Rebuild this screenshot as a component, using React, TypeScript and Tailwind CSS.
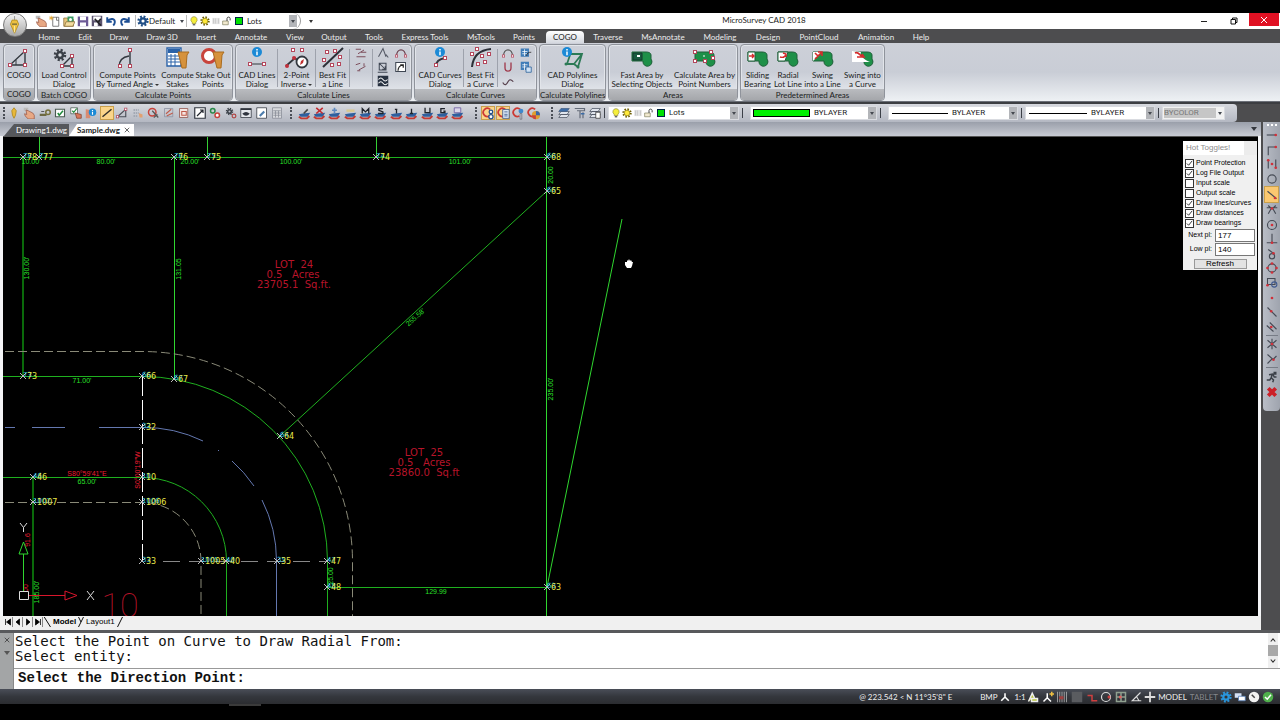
import type { ReactNode } from "react";

type Box = { children: ReactNode; className?: string };

function Ico({ children, className = "size-3" }: Box) {
  return (
    <svg viewBox="0 0 16 16" className={`${className} shrink-0`} fill="none" aria-hidden="true">
      {children}
    </svg>
  );
}

function Big({ children, className = "w-[26px]" }: Box) {
  return (
    <svg viewBox="0 0 26 22" className={`${className} h-[22px] shrink-0`} fill="none" aria-hidden="true">
      {children}
    </svg>
  );
}

function Node({ x, y }: { x: number; y: number }) {
  return <rect x={x - 1.5} y={y - 1.5} width="3" height="3" fill="#fff" stroke="#b4475c" />;
}

function Gear({ cx, cy, r, color, hole }: { cx: number; cy: number; r: number; color: string; hole: string }) {
  return (
    <g>
      <circle cx={cx} cy={cy} r={r} stroke={color} strokeWidth={r * 0.5} strokeDasharray={`${r * 0.42} ${r * 0.365}`} />
      <circle cx={cx} cy={cy} r={r * 0.85} fill={color} />
      <circle cx={cx} cy={cy} r={r * 0.35} fill={hole} />
    </g>
  );
}

function Info({ cx, cy, r }: { cx: number; cy: number; r: number }) {
  return (
    <g>
      <circle cx={cx} cy={cy} r={r} fill="#1c8ad6" />
      <path d={`M${cx} ${cy - r * 0.6}v${r * 0.3}M${cx} ${cy - r * 0.1}v${r * 0.75}`} stroke="#fff" strokeWidth={r * 0.3} />
    </g>
  );
}

const dark = "#33383f";

/* quick access + layer glyphs */
const hand = (
  <Ico>
    <path d="M1 1h6v4H1z" fill="#bbb" />
    <path d="M4 4l3 1 6 3 2 3v5H7l-4-4-1-3 3 1z" fill="#e8a884" stroke="#9a5a48" />
  </Ico>
);
const newDoc = (
  <Ico>
    <path d="M5 3h8v12H5z" fill="#fff" stroke="#555" />
    <path d="M3 1v6M0 4h6M1 2l4 4M5 2L1 6" stroke="#e0a020" />
    <path d="M10 3v4h3" stroke="#555" />
  </Ico>
);
const openDoc = (
  <Ico>
    <path d="M1 4h5l1 2h7v9H1z" fill="#e9c77c" stroke="#8a6d3b" />
    <path d="M6 2h8v8H6z" fill="#3b9a64" />
    <path d="M4 9h12l-3 6H2z" fill="#f3dc9e" stroke="#8a6d3b" />
    <circle cx="10" cy="6" r="2" fill="#fff" />
  </Ico>
);
const save = (
  <Ico>
    <path d="M1 2h14v13H1z" fill="#6d5a96" />
    <path d="M4 2h8v5H4zM4 10h8v5H4z" fill="#fff" />
  </Ico>
);
const saveAs = (
  <Ico>
    <path d="M1 1h14v14H1z" fill="#5c5470" />
    <path d="M3 2h10v5H3zM4 10h5v5H4z" fill="#fff" />
    <path d="M5 5l8 9M13 5l-3 4" stroke="#222" strokeWidth="2" />
  </Ico>
);
const undo = (
  <Ico>
    <path d="M3 3v6h6M3 9c4-6 11-4 10 1 0 2-1 3-2 4" stroke="#1e4f94" strokeWidth="2.6" />
  </Ico>
);
const redo = (
  <Ico>
    <path d="M13 3v6H7M13 9C9 3 2 5 3 10c0 2 1 3 2 4" stroke="#1e4f94" strokeWidth="2.6" />
  </Ico>
);

const quick = [
  { name: "Select", icon: hand },
  { name: "New", icon: newDoc },
  { name: "Open", icon: openDoc },
  { name: "Save", icon: save },
  { name: "Save as", icon: saveAs },
  { name: "Undo", icon: undo },
  { name: "Redo", icon: redo },
];

function LayerGlyphs() {
  return (
    <span className="flex items-center gap-px">
      <Ico className="size-2.5">
        <path d="M8 1a5 5 0 0 1 3 9v2H5v-2a5 5 0 0 1 3-9z" fill="#f5ee3c" stroke="#8c8630" />
        <path d="M6 13h4v2H6z" fill="#555" />
      </Ico>
      <Ico className="size-2.5">
        <circle cx="8" cy="8" r="6" stroke="#6b5d00" strokeWidth="3" strokeDasharray="2.4 2.3" />
        <circle cx="8" cy="8" r="4.5" fill="#ffe93a" stroke="#7a6a00" />
      </Ico>
      <Ico className="size-2.5">
        <path d="M2 3h12v10H2z" fill="#e4e4e4" />
        <path d="M4 4v8M7 4v8M12 4v8" stroke="#bbb" />
      </Ico>
      <Ico className="size-2.5">
        <path d="M1 8h9v6H1z" fill="#f1e9cf" stroke="#775" />
        <path d="M8 8V4c0-3 5-3 5 0v3" stroke="#444" strokeWidth="1.6" />
      </Ico>
      <span className="ml-0.5 size-2 border border-[#024] bg-[#00e000]" />
    </span>
  );
}

/* ribbon icons */
const cogo = (
  <Big>
    <path d="M4 18L19 4v14z" stroke={dark} strokeWidth="1.4" />
    <path d="M10 13v5" stroke={dark} />
    <Node x={4} y={18} />
    <Node x={19} y={4} />
    <Node x={19} y={18} />
  </Big>
);
const control = (
  <Big>
    <Gear cx={9} cy={8} r={5} color="#3b4048" hole="#d8dbe1" />
    <path d="M11 19l10-10v10z" stroke={dark} strokeWidth="1.4" />
    <Node x={11} y={19} />
    <Node x={21} y={9} />
    <Node x={21} y={19} />
  </Big>
);
const turned = (
  <Big>
    <path d="M15 3v17M4 20c0-6 3-10 10-11" stroke={dark} strokeWidth="1.4" />
    <Node x={15} y={3} />
    <Node x={15} y={19} />
    <Node x={5} y={19} />
  </Big>
);
const stakes = (
  <Big>
    <path d="M2 1h14v18H2z" fill="#fff" stroke="#2a62a8" strokeWidth="1.4" />
    <path d="M3 2h12v4H3z" fill="#2a62a8" />
    <path d="M3 9h12M3 12h12M3 15h12M6 7v12M10 7v12" stroke="#2a62a8" />
    <path d="M13 5h11l-2 3-1 13h-4L14 9z" fill="#d6923c" stroke="#a96c20" />
  </Big>
);
const stakeOut = (
  <Big>
    <circle cx="9" cy="9" r="6.5" fill="#fff" stroke="#c8443c" strokeWidth="3" />
    <path d="M13 5h11l-2 3-1 13h-4L14 9z" fill="#d6923c" stroke="#a96c20" />
  </Big>
);
const cadLines = (
  <Big>
    <Info cx={13} cy={5} r={5} />
    <path d="M6 17h14" stroke={dark} strokeWidth="1.2" />
    <Node x={6} y={17} />
    <Node x={20} y={17} />
  </Big>
);
const inverse = (
  <Big>
    <path d="M2 19l9-8 4 4" stroke={dark} strokeWidth="1.8" />
    <circle cx="18" cy="15" r="5.5" fill="#fff" stroke={dark} strokeWidth="1.8" />
    <path d="M16 18l1-4 3-2-1 4z" fill="#c03030" />
    <Node x={9} y={3} />
    <Node x={18} y={3} />
    <circle cx="3" cy="19" r="2" fill="#c0303c" />
    <circle cx="10" cy="11" r="2" fill="#c0303c" />
  </Big>
);
const fitLine = (
  <Big>
    <path d="M3 20L23 1" stroke="#2c3038" strokeWidth="2" />
    <Node x={7} y={5} />
    <Node x={15} y={4} />
    <Node x={4} y={13} />
    <Node x={20} y={10} />
    <Node x={12} y={18} />
    <Node x={19} y={17} />
  </Big>
);
const cadCurves = (
  <Big>
    <Info cx={13} cy={5} r={5} />
    <path d="M9 19c0-5 3-7 9-8" stroke={dark} strokeWidth="1.8" />
    <Node x={9} y={18} />
    <Node x={18} y={11} />
  </Big>
);
const fitCurve = (
  <Big>
    <path d="M4 20C5 9 12 3 23 2" stroke="#2c3038" strokeWidth="2" />
    <Node x={4} y={7} />
    <Node x={9} y={2} />
    <Node x={14} y={9} />
    <Node x={21} y={7} />
    <Node x={10} y={17} />
    <Node x={17} y={15} />
  </Big>
);
const polylines = (
  <Big>
    <path d="M6 7h16l-4 13-4-3 8-10M10 8l-3 9h8" stroke="#2c7a56" strokeWidth="1.8" />
    <circle cx="6" cy="17" r="1.5" fill="#2c7a56" />
    <circle cx="18" cy="20" r="1.5" fill="#2c7a56" />
    <Info cx={7} cy={5} r={5} />
  </Big>
);

function Lot({ children }: { children?: ReactNode }) {
  return (
    <Big>
      <path d="M3 5h14c3 0 5 1 5 3v4a4.500 4.500 0 1 1-8 2H3z" fill="#1e9048" stroke="#20603a" />
      {children}
    </Big>
  );
}
const fastArea = (
  <Lot>
    <path d="M4 6h9v7H4z" fill="#1a5c40" stroke="#14382c" />
    <rect x="8" y="8" width="3" height="2" fill="#fff" />
  </Lot>
);
const calcArea = (
  <Lot>
    <Node x={3} y={5} />
    <Node x={19} y={5} />
    <Node x={3} y={14} />
    <Node x={13} y={14} />
    <Node x={21} y={11} />
    <path d="M11 9h2" stroke="#fff" />
  </Lot>
);
const sliding = (
  <Lot>
    <path d="M3 5h7v9H3z" fill="#fff" stroke="#20603a" />
    <path d="M4 9h5M7 7l2 2-2 2" stroke="#d42c2c" strokeWidth="1.4" />
  </Lot>
);
const radial = (
  <Lot>
    <path d="M3 5h10l-3 9H3z" fill="#fff" stroke="#20603a" />
    <path d="M5 10c3 1 5 0 6-3M8 6l3 1v3" stroke="#d42c2c" strokeWidth="1.4" />
  </Lot>
);
const swingLine = (
  <Lot>
    <path d="M3 5l9 0-9 9z" fill="#fff" />
    <path d="M5 12l7-7M8 5h4v4M5 6l3 3" stroke="#d42c2c" strokeWidth="1.6" />
  </Lot>
);
const swingCurve = (
  <Lot>
    <path d="M2 4l9 1c-2 4 4 8 9 10L2 15z" fill="#fff" />
    <path d="M5 6c4-2 5 4 9 4M7 10h7l-2-3" stroke="#d42c2c" strokeWidth="1.6" />
  </Lot>
);

type Tool = { label: [string, string?]; icon: ReactNode; width: string; drop?: boolean };

function RibbonButton({ label, icon, width, drop }: Tool) {
  return (
    <button className={`${width} flex shrink-0 flex-col items-center whitespace-nowrap leading-[9px]`}>
      {icon}
      <span className="mt-0.5">{label[0]}</span>
      <span>
        {label[1]}
        {drop && <span className="ml-0.5 inline-block border-x-2 border-t-2 border-x-transparent border-t-[#333] align-middle" />}
      </span>
    </button>
  );
}

function Rule() {
  return <span className="my-0.5 w-px shrink-0 self-stretch border-l border-[#9ea2ac] bg-white" />;
}

function Group({ title, width, children }: { title: string; width: string; children: ReactNode }) {
  return (
    <section className={`${width} flex shrink-0 flex-col overflow-hidden rounded-sm border border-[#8f939b] shadow-[inset_0_0_0_1px_#e2e5ea]`}>
      <div className="flex h-11 items-start justify-center pt-0.5">{children}</div>
      <h2 className="bg-gradient-to-b from-[#b9bbbf] to-[#a3a5a9] text-center leading-3 whitespace-nowrap">{title}</h2>
    </section>
  );
}

const smallLines = [
  [
    <Ico><path d="M1 3h7M8 7h7M2 13h12M4 9l8-5" stroke="#7a4a58" strokeWidth="1.3" /></Ico>,
    <Ico><path d="M1 5l6-2M5 12l9-5M3 13h4M12 3v4" stroke="#7a4a58" strokeWidth="1.3" /></Ico>,
  ],
  [
    <Ico><path d="M2 13L8 2l4 11M12 10l3 4" stroke="#555a66" strokeWidth="1.4" /></Ico>,
    <Ico><path d="M3 3h9v9H3zM1 15h13M3 3l8 8M11 7v4H7" stroke="#3f4653" strokeWidth="1.4" /></Ico>,
    <Ico><path d="M1 1h14v14H1z" fill="#283241" /><path d="M2 6q3-4 6 0t6 0M2 11q3-4 6 0t6 0" stroke="#fff" strokeWidth="1.4" /></Ico>,
  ],
  [
    <Ico><path d="M2 12C2 1 14 1 14 12" stroke="#6a3f4c" strokeWidth="1.6" /><Node x={2} y={12} /><Node x={14} y={12} /></Ico>,
    <Ico><path d="M1 2h13v12H1z" fill="#fff" stroke="#3f4653" strokeWidth="1.4" /><path d="M4 13c0-4 2-7 7-8M7 5h4v4" stroke="#222" strokeWidth="1.6" /></Ico>,
  ],
];
const smallCurves = [
  [
    <Ico><path d="M2 12C2 1 14 1 14 12" stroke="#555" strokeWidth="1.6" /><Node x={2} y={12} /><Node x={14} y={12} /></Ico>,
    <Ico><path d="M4 2v7c0 6 8 6 8 0V2" stroke="#a03a4c" strokeWidth="1.8" /></Ico>,
    <Ico><path d="M1 10c3 5 5 3 7-1s5-3 7 0" stroke="#5a4450" strokeWidth="1.6" /></Ico>,
  ],
  [
    <Ico><path d="M1 2h11v11H1z" fill="#3f7db8" /><path d="M3 6h7M3 9h7M6 3v9" stroke="#fff" /><path d="M9 12c0-4 2-5 6-5" stroke="#222" /></Ico>,
    <Ico><path d="M1 1h11v11H1z" fill="#3f7db8" /><path d="M3 5h7M3 8h7M6 3v9" stroke="#fff" /><path d="M8 8h7v7H8z" fill="#cfe2f5" stroke="#225a94" /></Ico>,
  ],
];

function SmallColumn({ icons, width }: { icons: ReactNode[]; width: string }) {
  return (
    <div className={`${width} flex shrink-0 flex-col items-center gap-[3px]`}>
      {icons.map((icon, i) => (
        <button key={i} aria-label={`Tool ${i + 1}`} className="h-[11px]">
          {icon}
        </button>
      ))}
    </div>
  );
}

const tabs = [
  ["Home", "w-[34px]"], ["Edit", "w-[38px]"], ["Draw", "w-[30px]"], ["Draw 3D", "w-[56px]"],
  ["Insert", "w-[32px]"], ["Annotate", "w-[58px]"], ["View", "w-[30px]"], ["Output", "w-[48px]"],
  ["Tools", "w-[32px]"], ["Express Tools", "w-[70px]"], ["MsTools", "w-[42px]"], ["Points", "w-[44px]"],
  ["COGO", "w-[38px]"], ["Traverse", "w-[48px]"], ["MsAnnotate", "w-[62px]"], ["Modeling", "w-[52px]"],
  ["Design", "w-[44px]"], ["PointCloud", "w-[58px]"], ["Animation", "w-[56px]"], ["Help", "w-[34px]"],
];

/* toolbar strips */
const ship = (mark: ReactNode) => (
  <Ico className="size-[13px]">
    <path d="M1 9l5-1 9-1-3 5H3z" fill="#2f5f9e" />
    <path d="M1 12l3 2h7l3-3" stroke="#c43a34" strokeWidth="2.4" />
    {mark}
  </Ico>
);
const red = (d: string) => <path d={d} stroke="#c22a30" strokeWidth="2" />;
const ink = (d: string) => <path d={d} stroke="#20242c" strokeWidth="1.6" />;

const stripA: { name: string; icon: ReactNode; on?: boolean }[] = [
  { name: "Plumb bob", icon: <Ico><path d="M8 1l3 4-1 6-2 4-2-4-1-6z" fill="#e8b83a" stroke="#a88218" /></Ico> },
  { name: "Pick", icon: hand },
  { name: "Key in", icon: <Ico><path d="M1 9h9v3H1z" fill="#6d6a44" /><circle cx="12" cy="7" r="3" stroke="#76713c" strokeWidth="2" /><path d="M3 6h4" stroke="#333" /></Ico> },
  { name: "Check", icon: <Ico><path d="M2 3h12v10H2z" fill="#fff" stroke="#4a5a52" strokeWidth="1.5" /><path d="M5 8l2 3 5-6" stroke="#218a3c" strokeWidth="2" /></Ico> },
  { name: "Check and edit", icon: <Ico><path d="M1 1h9v8H1z" fill="#fff" stroke="#4a5a52" /><path d="M3 5l2 2 4-5" stroke="#218a3c" strokeWidth="1.6" /><path d="M7 8l8 2v5H9z" fill="#d9775a" stroke="#84402c" /></Ico> },
  { name: "Info", icon: <Ico><path d="M1 3l6 1v11H1z" fill="#d88a70" /><Info cx={10} cy={7} r={5} /></Ico> },
  { name: "Draw line", on: true, icon: <Ico><path d="M2 13L14 3" stroke="#33302a" strokeWidth="2" /></Ico> },
  { name: "Triangle", icon: <Ico><path d="M2 13L13 3v10z" stroke="#4a4e58" strokeWidth="1.5" /><Node x={2} y={13} /><Node x={13} y={3} /></Ico> },
  { name: "Dots", icon: <Ico><path d="M2 4h7M2 8h7M2 12h5" stroke="#98a0ac" strokeWidth="2" strokeDasharray="2 1" /><path d="M9 8l5 2v4h-4z" fill="#e2a070" /></Ico> },
  { name: "Target", icon: <Ico><circle cx="7" cy="7" r="5" stroke="#c8443c" strokeWidth="2" /><path d="M7 5l8 9M9 14l5-4" stroke="#555" strokeWidth="1.6" /></Ico> },
  { name: "Text", icon: <Ico><path d="M2 2h11v11H2z" stroke="#8b90a0" /><path d="M4 9l7-6M5 12l8-4" stroke="#c05a4a" strokeWidth="1.4" /></Ico> },
  { name: "Block", icon: <Ico><path d="M2 2h11v12H2z" fill="#f5e6e2" stroke="#8d5048" /><path d="M5 6h6v5H5z" stroke="#c05a4a" strokeWidth="1.4" /></Ico> },
  { name: "Scale", icon: <Ico><path d="M1 1h14v14H1z" fill="#fff" stroke="#2f343e" strokeWidth="1.6" />{ink("M4 12l8-8M8 4h4v4")}</Ico> },
  { name: "Rotate", icon: <Ico><circle cx="5" cy="5" r="3" stroke="#2a8a4a" strokeWidth="2" /><circle cx="11" cy="11" r="3" fill="#fff" stroke="#c8443c" strokeWidth="2" /></Ico> },
  { name: "Settings", icon: <Ico><Gear cx={6} cy={6} r={4} color="#3b4048" hole="#bcc0ca" /><circle cx="12" cy="12" r="2.5" stroke="#b04848" strokeWidth="1.6" /></Ico> },
  { name: "Preview", icon: <Ico><path d="M1 2h14v12H1z" fill="#e4e7ec" stroke="#2f343e" /><path d="M1 2h14v2H1z" fill="#2f343e" /><path d="M3 9q5-5 10 0-5 5-10 0z" fill="#2f343e" /></Ico> },
  { name: "Edit sheet", icon: <Ico><path d="M1 1h13v14H1z" fill="#fff" stroke="#2f343e" /><path d="M4 11l6-6 2 2-6 6z" fill="#4c7cac" /></Ico> },
  { name: "Calculator", icon: <Ico><path d="M2 1h12v14H2z" fill="#d8dade" stroke="#858a94" /><path d="M3 5h10M3 8h10M3 11h10M6 5v9M10 5v9" stroke="#858a94" /></Ico> },
];
const stripB = [
  ship(<path d="M7 8l5-5" stroke="#444" strokeWidth="2" />),
  ship(red("M4 1l8 7M12 1l-8 7")),
  ship(<path d="M8 1v7M5 4h6" stroke="#5e8ac0" strokeWidth="2" />),
  ship(<path d="M3 3h10v3H3z" fill="#d8c890" />),
  ship(ink("M4 8V2l4 4 4-4v6")),
  ship(ink("M11 2H6v2l5 2v2H5")),
  ship(ink("M8 8V2M6 3h3")),
  ship(ink("M8 8V2M6 8h4")),
  ship(ink("M5 1v6h6V1")),
  ship(ink("M11 2H6v5h5V5H9")),
  ship(<path d="M4 1h8v6H4z" fill="#dcd6ea" stroke="#6a5aa0" />),
];
const lens = (extra: ReactNode) => (
  <Ico className="size-[13px]">
    <path d="M9 11A5 5 0 1 1 10 3" stroke="#cc3a34" strokeWidth="2.2" />
    {extra}
  </Ico>
);
const stripC: { icon: ReactNode; on?: boolean }[] = [
  { on: true, icon: lens(<><circle cx="11" cy="6" r="2.2" fill="#fff" stroke="#26518e" strokeWidth="1.6" /><circle cx="11" cy="12" r="2.6" fill="#fff" stroke="#26518e" strokeWidth="1.6" /></>) },
  { on: true, icon: lens(<><path d="M7 3h8v11H7z" fill="#dbe6f4" stroke="#39598a" /><path d="M9 6h4M9 9h4M9 11h4" stroke="#39598a" /></>) },
  { icon: lens(<><circle cx="11" cy="5" r="3" fill="#3f87cc" /><path d="M10 8h2v7h-2z" fill="#eee" stroke="#667" /></>) },
  { icon: lens(<><circle cx="11" cy="10" r="5" fill="#e0a030" /><path d="M11 5a5 5 0 0 1 5 5h-5z" fill="#3a66a8" /><path d="M11 10v5a5 5 0 0 1-5-5z" fill="#c8443c" /></>) },
];
const layers = <path d="M4 2h11l-3 4H1zM4 6h11l-3 4H1zM4 10h11l-3 4H1z" fill="#dfe4ec" stroke="#4f5664" />;
const stripD = [
  <Ico>{layers}<path d="M4 2h11l-3 4H1z" fill="#3d6ca6" /></Ico>,
  <Ico><path d="M1 2h13v3H4M8 5v10M12 7v8" stroke="#646b78" strokeWidth="1.6" /><path d="M9 9h5" stroke="#3d6ca6" strokeWidth="2" /></Ico>,
  <Ico>{layers}<path d="M9 7h6v8H9z" fill="#fff" stroke="#333" /></Ico>,
];

function Grip() {
  return <span className="h-3 shrink-0 border-l-2 border-dotted border-[#4a4e56]" />;
}
function Bar() {
  return <span className="h-2.5 w-px shrink-0 bg-[#3c4048]" />;
}

function Strip({ width, children }: { width: string; children: ReactNode }) {
  return <div className={`${width} flex shrink-0 items-center justify-between`}>{children}</div>;
}

function Tiny({ icon, on, name }: { icon: ReactNode; on?: boolean; name: string }) {
  return (
    <button
      aria-label={name}
      className={
        on
          ? "flex size-[14px] items-center justify-center border border-[#c9a04c] bg-[#fbd58a]"
          : "flex size-[14px] items-center justify-center"
      }
    >
      {icon}
    </button>
  );
}

function Caret({ plain }: { plain?: boolean }) {
  return (
    <span className={plain ? "flex w-2 shrink-0 items-center justify-center self-stretch" : "flex w-2 shrink-0 items-center justify-center self-stretch bg-[#b3b5b9]"}>
      <span className="border-x-2 border-t-[3px] border-x-transparent border-t-[#44484f]" />
    </span>
  );
}

function Combo({ name, value, width, lead }: { name: string; value: string; width: string; lead: ReactNode }) {
  return (
    <div className={`${width} flex h-[14px] shrink-0 items-center gap-1 border border-[#d9dbe0] bg-white pl-0.5`}>
      {lead}
      <select aria-label={name} className="min-w-0 flex-1 appearance-none bg-transparent leading-3">
        <option>{value}</option>
      </select>
      <Caret />
    </div>
  );
}

/* snap toolbar on the right edge */
const dot = (x: number, y: number, r = 1.8) => <circle cx={x} cy={y} r={r} fill="#d0303a" />;
const line = (d: string) => <path d={d} stroke="#454a54" strokeWidth="1.5" />;
const snaps: { name: string; icon: ReactNode; on?: boolean }[] = [
  { name: "Endpoint", icon: <>{line("M1 8h12")}{dot(13, 8)}</> },
  { name: "From", icon: <>{line("M3 15V4h9")}{dot(13, 4)}</> },
  { name: "Midpoint", icon: <>{line("M3 2v12M13 2v12")}{dot(3, 3)}{dot(8, 8)}{dot(13, 13)}</> },
  { name: "Circle", icon: <circle cx="8" cy="8" r="5.5" stroke="#454a54" strokeWidth="1.5" /> },
  { name: "Nearest", on: true, icon: <>{line("M2 3l12 10")}{dot(12, 12)}</> },
  { name: "Apparent", icon: <>{line("M1 5h14M3 13l4-7M13 13L9 6M3 2l3 3M13 2l-3 3")}{dot(8, 6)}</> },
  { name: "Center", icon: <><circle cx="8" cy="8" r="6" stroke="#454a54" strokeWidth="1.5" />{dot(8, 8)}</> },
  { name: "Perpendicular", icon: <>{line("M8 1v12M1 13h14")}{dot(8, 13)}</> },
  { name: "Tangent", icon: <><circle cx="8" cy="11" r="3.5" stroke="#454a54" strokeWidth="1.5" />{line("M3 2l8 6")}{dot(10, 7)}</> },
  { name: "Quadrant", icon: <><circle cx="8" cy="8" r="5.5" stroke="#454a54" strokeWidth="1.5" />{dot(8, 2)}{dot(8, 14)}{dot(2, 8)}{dot(14, 8)}</> },
  { name: "Insertion", icon: <><path d="M2 2h10v8H2z" stroke="#454a54" strokeWidth="1.4" /><circle cx="11" cy="10" r="3.5" stroke="#405a90" strokeWidth="1.4" />{dot(2, 11)}</> },
  { name: "Point", icon: dot(8, 8) },
  { name: "Extension", icon: <>{line("M2 2l12 12")}{dot(7, 7)}</> },
  { name: "Parallel", icon: <>{line("M1 6l9 8M5 2l9 9")}{dot(7, 8)}</> },
];

function Snap({ icon, on, name }: { icon: ReactNode; on?: boolean; name: string }) {
  return (
    <button
      aria-label={name}
      className={
        on
          ? "flex min-h-0 w-full flex-1 items-center justify-center border border-[#c9a04c] bg-[#fbc870]"
          : "flex min-h-0 w-full flex-1 items-center justify-center"
      }
    >
      <Ico>{icon}</Ico>
    </button>
  );
}

/* drawing data, in window coordinates */
const points: [number, number, string][] = [
  [23, 157, "78"], [39, 157, "77"], [174, 157, "76"], [207, 157, "75"], [376, 157, "74"],
  [547, 157, "68"], [547, 191, "65"], [23, 376, "73"], [142, 376, "66"], [174, 379, "67"],
  [280, 436, "64"], [142, 427, "32"], [33, 477, "46"], [142, 477, "10"], [33, 502, "1007"],
  [142, 502, "1006"], [142, 561, "33"], [201, 561, "1005"], [226, 561, "40"], [277, 561, "35"],
  [327, 561, "47"], [327, 587, "48"], [547, 587, "63"],
];
const dims: [number, number, number, string][] = [
  [31, 164, 0, "10.00'"], [106, 164, 0, "80.00'"], [190, 164, 0, "20.00'"], [291, 164, 0, "100.00'"],
  [460, 164, 0, "101.00'"], [82, 383, 0, "71.00'"], [87, 484, 0, "65.00'"], [436, 594, 0, "129.99"],
  [29, 268, -90, "130.00'"], [181, 269, -90, "131.05"], [553, 175, -90, "20.00"], [553, 389, -90, "235.00'"],
  [417, 319, -42, "255.58'"], [39, 592, -90, "185.00'"], [333, 576, -90, "25.00"],
];

function Drawing() {
  return (
    <svg className="absolute inset-0 size-full" fill="none" role="img" aria-label="Subdivision drawing">
      <g transform="translate(-3 -137)" strokeWidth="1">
        <g stroke="#1fb01f">
          <path d="M3 157.500H547" />
          <path d="M39.500 136V157M207.500 136V157M376.500 136V157" stroke="#35d035" />
          <path d="M174.500 157V378M546.500 136V616" stroke="#2fd62f" />
          <path d="M23 157V376M33 477V616" stroke="#0a6a0a" strokeWidth="2" />
          <path d="M547 191L280 436" />
          <path d="M547 587L622 219" stroke="#2fd62f" />
          <path d="M328 587.500H547" />
          <path d="M3 376.500H142A185 185 0 0 1 327.500 561V616" />
          <path d="M3 477.500H142A84 84 0 0 1 226.500 561V616" />
        </g>
        <path d="M5 351.500H142A210 210 0 0 1 352.500 561V616" stroke="#8a8a78" strokeDasharray="9 4" />
        <path d="M5 502.500H142A59 59 0 0 1 201 561V616" stroke="#8a8a78" strokeDasharray="9 4" />
        <path
          d="M5 427.500H15M32 427.500H65M99 427.500H142A134.500 134.500 0 0 1 203 441M218 450l1 1M232 461A134.500 134.500 0 0 1 254 486M262 500A134.500 134.500 0 0 1 276.500 561V616"
          stroke="#6478b0"
        />
        <path d="M142.500 376V561" stroke="#fff" strokeDasharray="20 4" />
        <path d="M163 561.500H327" stroke="#888" strokeDasharray="17 9" />

        <g fontFamily="'Liberation Sans', sans-serif" fontSize="7" fill="#2ae02a" textAnchor="middle">
          {dims.map(([x, y, a, t]) => (
            <text key={`${x}-${y}`} x={x} y={y} transform={`rotate(${a} ${x} ${y})`}>
              {t}
            </text>
          ))}
          <g fill="#f01c32">
            <text x="87" y="476">S80°59'41"E</text>
            <text x="140" y="470" transform="rotate(-90 140 470)">S0°00'19"W</text>
            <text x="30" y="540" transform="rotate(-90 30 540)">91.6</text>
            <text x="28" y="588" transform="rotate(-90 28 588)">00</text>
          </g>
        </g>

        {points.map(([x, y, t]) => (
          <g key={`${x}-${y}`} fontFamily="'DejaVu Sans', sans-serif">
            <path d={`M${x - 3} ${y - 3}l6 6m0 -6l-6 6`} stroke="#bcbcbc" />
            <text x={x} y={y + 1} fontSize="7" fill="#35c8e8">{t}</text>
            <text x={x + 4} y={y + 3} fontSize="8" fill="#e8e84a">{t}</text>
          </g>
        ))}

        <g fontFamily="'DejaVu Sans', sans-serif" fontSize="10" fill="#b8142a" textAnchor="middle">
          <text x="294" y="268">{"LOT\u00a0 24"}</text>
          <text x="293" y="278">{"0.5\u00a0\u00a0 Acres"}</text>
          <text x="294" y="288">{"23705.1\u00a0 Sq.ft."}</text>
          <text x="424" y="456">{"LOT\u00a0 25"}</text>
          <text x="424" y="466">{"0.5\u00a0\u00a0 Acres"}</text>
          <text x="424" y="476">{"23860.0\u00a0 Sq.ft"}</text>
          <text x="120" y="617" fontSize="34" fontFamily="Roboto, sans-serif" fontWeight="100">
            10
          </text>
        </g>

        <path d="M23.500 591V554M19 554L23.500 542L28 554z" stroke="#2fd62f" />
        <path d="M28 595.500H65M65 591L77 595.500L65 600z" stroke="#d8162c" />
        <path d="M19.500 591.500h9v8h-9z" stroke="#ddd" />
        <path d="M20 523l3.500 4.500L27 523M23.500 527.500V532M87 591l7 9M94 591l-7 9" stroke="#ddd" />
        <path
          d="M625 262l2 0 0-2 1 1 1-2 1 2 1-1 1 2 1 0-1 4-1 2h-4l-2-3z"
          fill="#fff"
        />
      </g>
    </svg>
  );
}

const toggles: [string, boolean][] = [
  ["Point Protection", true],
  ["Log File Output", true],
  ["Input scale", false],
  ["Output scale", false],
  ["Draw lines/curves", true],
  ["Draw distances", true],
  ["Draw bearings", true],
];

function HotToggles() {
  return (
    <aside className="absolute top-1 right-px w-[74px] bg-[#f0f0f0] pb-px font-['Liberation_Sans',sans-serif] text-[7px] text-black">
      <div className="flex h-[14px] justify-between bg-white pl-[3px] text-[8px] leading-[14px] text-[#8c8c8c]">
        <span>Hot Toggles!</span>
        <button aria-label="Close Hot Toggles" className="w-[13px] bg-[#ececec]" />
      </div>
      <div className="mt-[3px] pl-0.5">
        {toggles.map(([name, on]) => (
          <label key={name} className="flex h-[10px] items-center gap-0.5 leading-[10px] whitespace-nowrap">
            <input type="checkbox" defaultChecked={on} className="peer sr-only" />
            <span className="flex size-[9px] items-center justify-center border border-[#333] bg-white *:opacity-0 peer-checked:*:opacity-100">
              <svg viewBox="0 0 8 8" className="size-[7px]" fill="none">
                <path d="M1 4l2 2 4-5" stroke="#222" />
              </svg>
            </span>
            {name}
          </label>
        ))}
      </div>
      {[["Next pl:", "177"], ["Low pl:", "140"]].map(([name, value]) => (
        <label key={name} className="mt-px flex h-[13px] items-center justify-end gap-[3px] pr-0.5">
          {name}
          <input defaultValue={value} className="h-[13px] w-10 border border-[#777] bg-white pl-0.5 text-[8px]" />
        </label>
      ))}
      <button className="mx-auto mt-[3px] block h-[10px] w-[53px] border border-[#999] bg-[#e3e3e3] text-[8px] leading-2">Refresh</button>
    </aside>
  );
}

const statusIcons = [
  <path d="M2 14L7 3l3 6M6 10h8v4H6z" stroke="#eee" strokeWidth="2" fill="#b8c43c" />,
  <><path d="M2 14l5-5 5 5M7 9V3" stroke="#fff" strokeWidth="2" /><path d="M10 4h6M13 1v6" stroke="#f0c040" strokeWidth="2" /></>,
  <><path d="M2 1v14M5 1v14M8 1v14M11 1v14M14 1v14" stroke="#bbb" /><path d="M4 7h6v4H4z" fill="#a04040" /></>,
  <path d="M1 1h14v14H1z" fill="#5a5c60" />,
  <path d="M2 6h6v7h7" stroke="#d04040" strokeWidth="2" />,
  <><circle cx="8" cy="8" r="6" stroke="#ddd" strokeWidth="1.6" /><circle cx="12" cy="8" r="2" fill="#d04040" /></>,
  <><path d="M2 2h12v12H2zM8 2v12M2 8h12" stroke="#8fa08f" strokeWidth="2" /><circle cx="7" cy="8" r="2" fill="#e06060" /></>,
  <path d="M14 2L3 13h12M9 8l3 5" stroke="#ddd" strokeWidth="1.5" />,
  <path d="M8 1v14M1 8h14" stroke="#ddd" strokeWidth="2.4" />,
];

export default function App() {
  return (
    <div className="flex min-h-screen flex-col bg-black pt-[13px] font-['Lato',sans-serif] text-[8px] text-[#1b1d22]">
      <header className="relative">
        <div className="flex h-4 bg-white">
          <div className="flex w-[301px] shrink-0 items-center rounded-r-lg border-r border-[#999] pl-[35px]">
            <div className="flex items-center gap-0.5">
              {quick.map((q) => (
                <button key={q.name} aria-label={q.name}>
                  {q.icon}
                </button>
              ))}
            </div>
            <div className="ml-1 flex items-center border-x border-[#bbb] pl-px">
              <Ico className="size-3">
                <Gear cx={8} cy={8} r={6} color="#1f4e86" hole="#fff" />
              </Ico>
              <select aria-label="Workspace" className="w-[29px] appearance-none leading-3">
                <option>Default</option>
              </select>
              <Caret plain />
            </div>
            <div className="mr-[3px] ml-0.5 flex min-w-0 flex-1 items-center gap-1">
              <LayerGlyphs />
              <select aria-label="Active layer" className="min-w-0 flex-1 appearance-none leading-3">
                <option>Lots</option>
              </select>
              <Caret />
            </div>
          </div>
          <button aria-label="Customize quick access" className="ml-1.5 flex w-2 items-center">
            <span className="mx-auto border-x-2 border-t-[3px] border-x-transparent border-t-[#333]" />
          </button>
          <h1 className="flex-1 pl-6 text-center leading-[14px]">MicroSurvey CAD 2018</h1>
          <button aria-label="Minimize" className="w-[30px]">
            <span className="mx-auto block h-px w-1.5 bg-[#222]" />
          </button>
          <button aria-label="Restore" className="flex w-[30px] items-center justify-center">
            <Ico className="size-2">
              <path d="M2 5h9v9H2zM5 5V2h9v9h-3" stroke="#111" strokeWidth="2" />
            </Ico>
          </button>
          <button aria-label="Close" className="mr-px flex h-[13px] w-[30px] items-center justify-center bg-[#e01123]">
            <Ico className="size-2">
              <path d="M2 2l12 12M14 2L2 14" stroke="#fff" strokeWidth="2" />
            </Ico>
          </button>
        </div>

        <nav className="flex h-[14px] items-end bg-[#4d4d4f] pl-8 text-[#ececec]">
          {tabs.map(([name, width]) => (
            <button
              key={name}
              className={
                name === "COGO"
                  ? `${width} h-3 shrink-0 rounded-t-sm bg-gradient-to-b from-white to-[#d5d8df] leading-3 whitespace-nowrap text-[#1b1d22]`
                  : `${width} h-3 shrink-0 leading-3 whitespace-nowrap`
              }
            >
              {name}
            </button>
          ))}
        </nav>

        <button
          aria-label="Application menu"
          className="absolute top-0 left-[3px] flex size-6 items-center justify-center rounded-full border border-[#777] bg-gradient-to-b from-[#f4f4f4] to-[#a8a8a8]"
        >
          <svg viewBox="0 0 16 22" className="h-[18px]" fill="none">
            <path d="M8 0v5" stroke="#888" />
            <path d="M5 5h6l2 5-5 11-5-11z" fill="#ecc040" stroke="#b08c20" />
            <path d="M5 10h6" stroke="#8b7a3c" strokeWidth="2" />
            <path d="M8 12v8" stroke="#fff3b0" />
          </svg>
        </button>
      </header>

      <div className="flex h-[59px] gap-0.5 border-b border-[#6c7078] bg-gradient-to-b from-[#cdd0d8] via-[#c9cdd6] to-[#eef1f4] px-[3px] pt-px">
        <Group title="COGO" width="w-[32px]">
          <RibbonButton width="w-[30px]" icon={cogo} label={["COGO"]} />
        </Group>
        <Group title="Batch COGO" width="w-[54px]">
          <RibbonButton width="w-[50px]" icon={control} label={["Load Control", "Dialog"]} />
        </Group>
        <Group title="Calculate Points" width="w-[140px]">
          <RibbonButton width="w-[66px]" icon={turned} label={["Compute Points", "By Turned Angle"]} drop />
          <RibbonButton width="w-[34px]" icon={stakes} label={["Compute", "Stakes"]} />
          <RibbonButton width="w-[37px]" icon={stakeOut} label={["Stake Out", "Points"]} />
        </Group>
        <Group title="Calculate Lines" width="w-[177px]">
          <RibbonButton width="w-[40px]" icon={cadLines} label={["CAD Lines", "Dialog"]} />
          <Rule />
          <RibbonButton width="w-[37px]" icon={inverse} label={["2-Point", "Inverse"]} drop />
          <Rule />
          <RibbonButton width="w-[33px]" icon={fitLine} label={["Best Fit", "a Line"]} />
          <Rule />
          <SmallColumn width="w-[22px]" icons={smallLines[0]} />
          <Rule />
          <SmallColumn width="w-[19px]" icons={smallLines[1]} />
          <SmallColumn width="w-[18px]" icons={smallLines[2]} />
        </Group>
        <Group title="Calculate Curves" width="w-[123px]">
          <RibbonButton width="w-[46px]" icon={cadCurves} label={["CAD Curves", "Dialog"]} />
          <Rule />
          <RibbonButton width="w-[33px]" icon={fitCurve} label={["Best Fit", "a Curve"]} />
          <Rule />
          <SmallColumn width="w-[20px]" icons={smallCurves[0]} />
          <SmallColumn width="w-[16px]" icons={smallCurves[1]} />
        </Group>
        <Group title="Calculate Polylines" width="w-[67px]">
          <RibbonButton width="w-[50px]" icon={polylines} label={["CAD Polylines", "Dialog"]} />
        </Group>
        <Group title="Areas" width="w-[130px]">
          <RibbonButton width="w-[63px]" icon={fastArea} label={["Fast Area by", "Selecting Objects"]} />
          <RibbonButton width="w-[62px]" icon={calcArea} label={["Calculate Area by", "Point Numbers"]} />
        </Group>
        <Group title="Predetermined Areas" width="w-[145px]">
          <RibbonButton width="w-[31px]" icon={sliding} label={["Sliding", "Bearing"]} />
          <RibbonButton width="w-[30px]" icon={radial} label={["Radial", "Lot Line"]} />
          <RibbonButton width="w-[39px]" icon={swingLine} label={["Swing", "into a Line"]} />
          <RibbonButton width="w-[41px]" icon={swingCurve} label={["Swing into", "a Curve"]} />
        </Group>
      </div>

      <div className="border-t-2 border-[#3c3e42] bg-[#4d4d4f]">
        <div className="flex h-[18px] w-[1237px] items-center rounded-r-sm bg-gradient-to-b from-[#d6d8de] to-[#b4b8c2] pl-[3px]">
          <Grip />
          <span className="w-0.5" />
          <Strip width="w-[277px]">
            {stripA.map((t) => (
              <Tiny key={t.name} {...t} />
            ))}
          </Strip>
          <span className="w-[6px]" />
          <Grip />
          <span className="w-[5px]" />
          <Strip width="w-[168px]">
            {stripB.map((icon, i) => (
              <Tiny key={i} icon={icon} name={`Layer tool ${i + 1}`} />
            ))}
          </Strip>
          <span className="w-[10px]" />
          <Grip />
          <span className="w-1" />
          <Strip width="w-[60px]">
            {stripC.map((t, i) => (
              <Tiny key={i} {...t} name={`Stake view ${i + 1}`} />
            ))}
          </Strip>
          <span className="w-[10px]" />
          <Grip />
          <span className="w-1" />
          <Strip width="w-[45px]">
            {stripD.map((icon, i) => (
              <Tiny key={i} icon={icon} name={`Layers ${i + 1}`} />
            ))}
          </Strip>
          <div className="flex items-center gap-[3px] pl-0.5 font-['Roboto',sans-serif]">
            <Bar />
            <Combo name="Layer" value="Lots" width="w-[131px]" lead={<LayerGlyphs />} />
            <Bar />
            <span className="w-px" />
            <Combo name="Color" value="BYLAYER" width="w-[127px]" lead={<span className="h-2 w-[57px] border border-black bg-[#00f000]" />} />
            <Bar />
            <span className="w-px" />
            <Combo name="Linetype" value="BYLAYER" width="w-[130px]" lead={<span className="ml-px h-px w-[56px] bg-black" />} />
            <Bar />
            <Combo name="Lineweight" value="BYLAYER" width="w-[130px]" lead={<span className="ml-px h-px w-[58px] bg-black" />} />
            <Bar />
            <div className="flex h-[14px] w-[63px] items-center border border-[#d9dbe0] bg-[#f2f2f2] pl-px">
              <select aria-label="Plot style" disabled className="min-w-0 flex-1 appearance-none bg-[#c6c6c6] leading-[10px] text-[#777]">
                <option>BYCOLOR</option>
              </select>
              <Caret plain />
            </div>
          </div>
        </div>
      </div>

      <div className="flex flex-1 bg-[#4d4d4f]">
        <main className="flex min-w-0 flex-1 flex-col bg-[#f4f5f7]">
          <div className="flex h-[14px] items-end bg-gradient-to-b from-[#9a9faa] to-[#c9ccd4] pl-1">
            <button className="h-3 w-[65px] overflow-hidden bg-[#55575b] pl-3 text-left leading-3 text-white [clip-path:polygon(10px_0,100%_0,100%_100%,0_100%)]">
              Drawing1.dwg
            </button>
            <div className="flex h-3 w-[65px] items-center justify-between bg-white pr-1 pl-2 [clip-path:polygon(8px_0,100%_0,100%_100%,0_100%)]">
              <button className="font-bold leading-3">Sample.dwg</button>
              <button aria-label="Close Sample.dwg">
                <Ico className="size-1.5">
                  <path d="M2 2l12 12M14 2L2 14" stroke="#333" strokeWidth="2" />
                </Ico>
              </button>
            </div>
            <button aria-label="Drawing list" className="mr-1 mb-[5px] ml-auto">
              <span className="block border-x-[3px] border-t-[4px] border-x-transparent border-t-[#33363c]" />
            </button>
          </div>
          <div className="relative mr-[3px] ml-[3px] flex-1 border-t border-[#555] bg-black">
            <Drawing />
            <HotToggles />
          </div>
          <div className="flex h-[14px] items-center bg-[#f0f0f0] pb-0.5 pl-[3px] font-['Liberation_Sans',sans-serif] text-black">
            {[
              ["First", "M3 2v12M13 2v12L5 8z"],
              ["Previous", "M11 2v12L4 8z"],
              ["Next", "M5 2v12l7-6z"],
              ["Last", "M13 2v12M3 2v12l8-6z"],
            ].map(([name, d]) => (
              <button key={name} aria-label={name} className="flex h-[10px] w-[10px] items-center justify-center border-r border-[#888]">
                <Ico className="size-2">
                  <path d={d} fill="#000" stroke="#000" strokeWidth="1.5" />
                </Ico>
              </button>
            ))}
            <Ico className="h-[10px] w-2.5">
              <path d="M2 0l10 16" stroke="#000" strokeWidth="1.5" />
            </Ico>
            <button className="font-bold">Model</button>
            <Ico className="h-[10px] w-2.5">
              <path d="M12 0L4 16M4 0l4 8" stroke="#000" strokeWidth="1.5" />
            </Ico>
            <button>Layout1</button>
            <Ico className="h-[10px] w-2.5">
              <path d="M12 0L4 16" stroke="#000" strokeWidth="1.5" />
            </Ico>
          </div>
        </main>

        <div className="ml-0.5 flex h-[289px] w-[17px] flex-col items-center rounded-b-sm bg-gradient-to-r from-[#b9bdc6] to-[#9fa4ae] pt-0.5">
          <span className="mb-0.5 w-2.5 border-t-2 border-dotted border-white" />
          <div className="flex h-[206px] w-full flex-col px-px">
            {snaps.map((s) => (
              <Snap key={s.name} {...s} />
            ))}
          </div>
          <span className="my-px h-px w-3 bg-[#777c86]" />
          <div className="flex h-[29px] w-full flex-col">
            <Snap name="Intersection" icon={<>{line("M2 3l12 10M14 3L2 13M8 1v14")}{dot(8, 8)}</>} />
            <Snap name="Apparent intersection" icon={<>{line("M2 2l8 7M2 14l6-6M14 4l-4 4")}{dot(10, 9)}</>} />
          </div>
          <span className="my-px h-px w-3 bg-[#777c86]" />
          <div className="flex h-[31px] w-full flex-col">
            <Snap name="Quick snap" icon={<path d="M11 2h2v2h-2zM4 5l5-1 2 4 3 0M8 5L7 9l3 3-1 3M7 9l-2 3H1" stroke="#3b4048" strokeWidth="2" />} />
            <Snap name="Clear snaps" icon={<path d="M3 3l10 10M13 3L3 13" stroke="#cc2028" strokeWidth="5" />} />
          </div>
        </div>
      </div>

      <section className="border-t-[3px] border-[#58595c] bg-white font-['DejaVu_Sans_Mono',monospace] text-[14px] text-[#111]">
        <div className="flex">
          <div className="flex w-[14px] shrink-0 flex-col items-center gap-2 border-r border-[#888] bg-[#a3a5a6] pt-1">
            <Ico className="size-1.5">
              <path d="M2 2l12 12M14 2L2 14" stroke="#333" strokeWidth="2" />
            </Ico>
            <span className="border-x-[3px] border-t-[4px] border-x-transparent border-t-[#555]" />
          </div>
          <div className="min-w-0 flex-1">
            <div className="flex h-9 border-b border-[#999]">
              <div className="flex-1 pt-px pl-px leading-[15px] whitespace-nowrap">
                <p>Select the Point on Curve to Draw Radial From:</p>
                <p>Select entity:</p>
              </div>
              <div className="mr-0.5 flex w-[10px] flex-col items-center justify-between bg-[#f0f0f0] py-1">
                <Ico className="size-1.5">
                  <path d="M2 12l6-7 6 7" stroke="#333" strokeWidth="3" />
                </Ico>
                <span className="h-[11px] w-full bg-[#a9a9a9]" />
                <Ico className="size-1.5">
                  <path d="M2 4l6 7 6-7" stroke="#333" strokeWidth="3" />
                </Ico>
              </div>
            </div>
            <input
              aria-label="Command"
              defaultValue="Select the Direction Point:"
              className="block h-5 w-full bg-white pb-px pl-1 font-['Liberation_Mono',monospace] font-bold"
            />
          </div>
        </div>
      </section>

      <footer className="flex h-[15px] items-center justify-end bg-gradient-to-b from-[#4a4e58] via-[#34373d] to-[#2b2c30] pr-1.5 text-[#f0f0f0]">
        <span className="w-[121px] whitespace-nowrap">@ 223.542 &lt; N 11°35'8" E</span>
        <button className="w-[20px] text-left">BMP</button>
        <Ico className="mr-[3px] size-2.5">
          <path d="M8 2v6L2 14M8 8l6 6" stroke="#fff" strokeWidth="2.5" />
        </Ico>
        <button className="w-[14px]">1:1</button>
        <div className="flex w-[129px] justify-between">
          {statusIcons.map((icon, i) => (
            <button key={i} aria-label={`Drafting aid ${i + 1}`}>
              <Ico className="size-3">{icon}</Ico>
            </button>
          ))}
        </div>
        <button className="mx-0.5">MODEL</button>
        <button className="ml-px text-[#85878b]">TABLET</button>
        <div className="ml-0.5 flex gap-0.5">
          <Ico>
            <Gear cx={8} cy={8} r={6} color="#2a96dc" hole="#333" />
          </Ico>
          <Ico>
            <path d="M1 3h9v6H1z" fill="#d4e0f4" />
            <path d="M6 7h9v6H6z" fill="#fff" stroke="#4a76b4" />
          </Ico>
          <Ico>
            <circle cx="8" cy="8" r="7" fill="#f2f2f2" />
            <path d="M5 5l4 4" stroke="#444" strokeWidth="2" />
          </Ico>
          <Ico>
            <circle cx="8" cy="8" r="7" fill="#4fb04c" />
            <path d="M4 8l3 3 5-6" stroke="#fff" strokeWidth="2" />
          </Ico>
        </div>
      </footer>
      <div className="h-4 bg-black">
        <span className="ml-[229px] block h-0.5 w-8 bg-[#3a3a3a]" />
      </div>
    </div>
  );
}
